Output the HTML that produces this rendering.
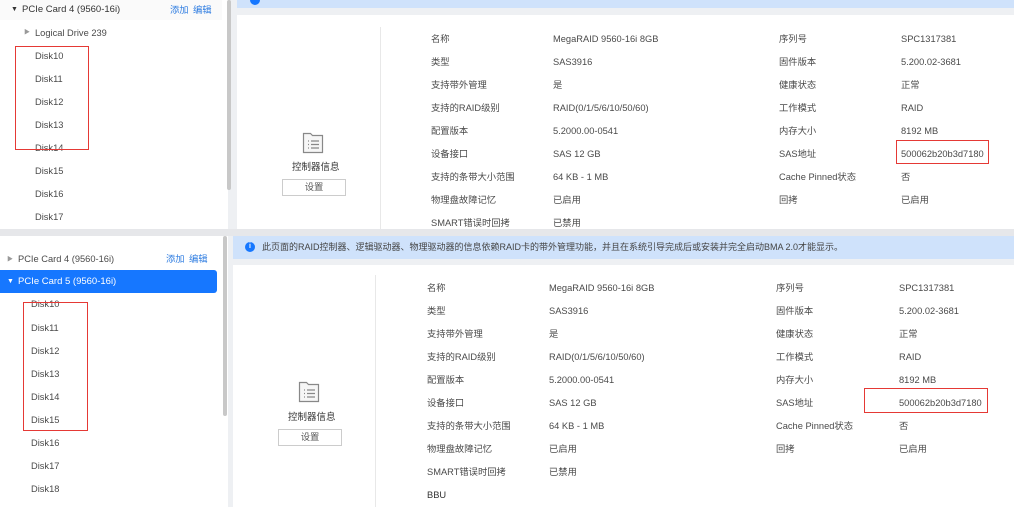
<!DOCTYPE html>
<html><head><meta charset="utf-8"><style>
*{margin:0;padding:0;box-sizing:border-box}
body{width:1014px;height:507px;overflow:hidden;background:#eef0f3;font-family:"Liberation Sans","Noto Sans CJK SC",sans-serif;font-size:9.3px;line-height:12px;color:#4a4a4a;position:relative}
.a{position:absolute;white-space:nowrap}
.side{position:absolute;left:0;width:228px;background:#fff}
.card{position:absolute;background:#fff}
.info{position:absolute;background:#cfe2fb;color:#444}
.red{position:absolute;border:1.5px solid #e53935}
.btn{position:absolute;border:1px solid #ccc;background:#fff;text-align:center;color:#555}
.vl{position:absolute;width:1px;background:#e8e8e8}
.sb{position:absolute;width:4px;background:#c8c8c8;border-radius:2px}
.blue{color:#2f7de1}
.dk{color:#333}
</style></head><body>
<!-- TOP PANEL -->
<div class="side" style="top:0;height:229px"></div>
<div class="a" style="left:0;top:0;width:222px;height:20px;background:#fafafa"></div>
<div class="sb" style="left:227px;top:0;height:190px"></div>
<div class="a dk" style="left:11px;top:4px;font-size:7px">▼</div>
<div class="a dk" style="left:22px;top:4px;font-size:9.5px">PCIe Card 4 (9560-16i)</div>
<div class="a blue" style="left:170px;top:4px">添加</div>
<div class="a blue" style="left:193px;top:4px">编辑</div>
<div class="a" style="left:24px;top:27px;font-size:6px;color:#999">▶</div>
<div class="a" style="left:35px;top:27px">Logical Drive 239</div>
<div class="a" style="left:35px;top:50px">Disk10</div>
<div class="a" style="left:35px;top:73px">Disk11</div>
<div class="a" style="left:35px;top:96px">Disk12</div>
<div class="a" style="left:35px;top:119px">Disk13</div>
<div class="a" style="left:35px;top:142px">Disk14</div>
<div class="a" style="left:35px;top:165px">Disk15</div>
<div class="a" style="left:35px;top:188px">Disk16</div>
<div class="a" style="left:35px;top:211px">Disk17</div>
<div class="red" style="left:15px;top:46px;width:74px;height:104px"></div>

<div class="info" style="left:237px;top:0;width:777px;height:8px"></div>
<div class="a" style="left:250px;top:-5px;width:10px;height:10px;border-radius:50%;background:#1677ff"></div>
<div class="card" style="left:237px;top:15px;width:777px;height:214px"></div>
<div class="vl" style="left:380px;top:27px;height:202px"></div>
<svg class="a" style="left:302px;top:131px" width="22" height="23" viewBox="0 0 22 23"><path d="M1.5 2.5h7l2 2h10v17h-19z" fill="#f6f6f6" stroke="#888" stroke-width="1.2"/><path d="M6 10h1M9 10h8M6 13.5h1M9 13.5h8M6 17h1M9 17h8" stroke="#888" stroke-width="1.2"/></svg>
<div class="a dk" style="left:292px;top:162px;font-size:9.5px">控制器信息</div>
<div class="btn" style="left:282px;top:179px;width:64px;height:17px;line-height:15px">设置</div>

<div class="a" style="left:431px;top:33px">名称</div><div class="a" style="left:553px;top:33px">MegaRAID 9560-16i 8GB</div>
<div class="a" style="left:431px;top:56px">类型</div><div class="a" style="left:553px;top:56px">SAS3916</div>
<div class="a" style="left:431px;top:79px">支持带外管理</div><div class="a" style="left:553px;top:79px">是</div>
<div class="a" style="left:431px;top:102px">支持的RAID级别</div><div class="a" style="left:553px;top:102px">RAID(0/1/5/6/10/50/60)</div>
<div class="a" style="left:431px;top:125px">配置版本</div><div class="a" style="left:553px;top:125px">5.2000.00-0541</div>
<div class="a" style="left:431px;top:148px">设备接口</div><div class="a" style="left:553px;top:148px">SAS 12 GB</div>
<div class="a" style="left:431px;top:171px">支持的条带大小范围</div><div class="a" style="left:553px;top:171px">64 KB - 1 MB</div>
<div class="a" style="left:431px;top:194px">物理盘故障记忆</div><div class="a" style="left:553px;top:194px">已启用</div>
<div class="a" style="left:431px;top:217px">SMART错误时回拷</div><div class="a" style="left:553px;top:217px">已禁用</div>

<div class="a" style="left:779px;top:33px">序列号</div><div class="a" style="left:901px;top:33px">SPC1317381</div>
<div class="a" style="left:779px;top:56px">固件版本</div><div class="a" style="left:901px;top:56px">5.200.02-3681</div>
<div class="a" style="left:779px;top:79px">健康状态</div><div class="a" style="left:901px;top:79px">正常</div>
<div class="a" style="left:779px;top:102px">工作模式</div><div class="a" style="left:901px;top:102px">RAID</div>
<div class="a" style="left:779px;top:125px">内存大小</div><div class="a" style="left:901px;top:125px">8192 MB</div>
<div class="a" style="left:779px;top:148px">SAS地址</div><div class="a" style="left:901px;top:148px">500062b20b3d7180</div>
<div class="a" style="left:779px;top:171px">Cache Pinned状态</div><div class="a" style="left:901px;top:171px">否</div>
<div class="a" style="left:779px;top:194px">回拷</div><div class="a" style="left:901px;top:194px">已启用</div>
<div class="red" style="left:896px;top:140px;width:93px;height:24px"></div>

<!-- divider -->
<div class="a" style="left:0;top:229px;width:1014px;height:7px;background:#e6e7ea"></div>

<!-- BOTTOM PANEL -->
<div class="side" style="top:236px;height:271px"></div>
<div class="sb" style="left:223px;top:236px;height:180px"></div>
<div class="a" style="left:7px;top:254px;font-size:6px;color:#999">▶</div>
<div class="a" style="left:18px;top:253px">PCIe Card 4 (9560-16i)</div>
<div class="a blue" style="left:166px;top:253px">添加</div>
<div class="a blue" style="left:189px;top:253px">编辑</div>
<div class="a" style="left:31px;top:298px">Disk10</div>
<div class="a" style="left:0;top:270px;width:217px;height:23px;background:#1677ff;border-radius:0 3px 3px 0"></div>
<div class="a" style="left:7px;top:276px;font-size:7px;color:#fff">▼</div>
<div class="a" style="left:18px;top:276px;color:#fff;font-size:9.5px">PCIe Card 5 (9560-16i)</div>
<div class="a" style="left:31px;top:322px">Disk11</div>
<div class="a" style="left:31px;top:345px">Disk12</div>
<div class="a" style="left:31px;top:368px">Disk13</div>
<div class="a" style="left:31px;top:391px">Disk14</div>
<div class="a" style="left:31px;top:414px">Disk15</div>
<div class="a" style="left:31px;top:437px">Disk16</div>
<div class="a" style="left:31px;top:460px">Disk17</div>
<div class="a" style="left:31px;top:483px">Disk18</div>
<div class="red" style="left:23px;top:302px;width:65px;height:129px"></div>

<div class="info" style="left:233px;top:236px;width:781px;height:23px"></div>
<div class="a" style="left:245px;top:242px;width:10px;height:10px;border-radius:50%;background:#1677ff;color:#fff;font-size:7px;text-align:center;line-height:10px;font-weight:bold">i</div>
<div class="a" style="left:262px;top:241px;font-size:9px;color:#444">此页面的RAID控制器、逻辑驱动器、物理驱动器的信息依赖RAID卡的带外管理功能，并且在系统引导完成后或安装并完全启动BMA 2.0才能显示。</div>
<div class="card" style="left:233px;top:265px;width:781px;height:242px"></div>
<div class="vl" style="left:375px;top:275px;height:232px"></div>
<svg class="a" style="left:298px;top:380px" width="22" height="23" viewBox="0 0 22 23"><path d="M1.5 2.5h7l2 2h10v17h-19z" fill="#f6f6f6" stroke="#888" stroke-width="1.2"/><path d="M6 10h1M9 10h8M6 13.5h1M9 13.5h8M6 17h1M9 17h8" stroke="#888" stroke-width="1.2"/></svg>
<div class="a dk" style="left:288px;top:412px;font-size:9.5px">控制器信息</div>
<div class="btn" style="left:278px;top:429px;width:64px;height:17px;line-height:15px">设置</div>

<div class="a" style="left:427px;top:282px">名称</div><div class="a" style="left:549px;top:282px">MegaRAID 9560-16i 8GB</div>
<div class="a" style="left:427px;top:305px">类型</div><div class="a" style="left:549px;top:305px">SAS3916</div>
<div class="a" style="left:427px;top:328px">支持带外管理</div><div class="a" style="left:549px;top:328px">是</div>
<div class="a" style="left:427px;top:351px">支持的RAID级别</div><div class="a" style="left:549px;top:351px">RAID(0/1/5/6/10/50/60)</div>
<div class="a" style="left:427px;top:374px">配置版本</div><div class="a" style="left:549px;top:374px">5.2000.00-0541</div>
<div class="a" style="left:427px;top:397px">设备接口</div><div class="a" style="left:549px;top:397px">SAS 12 GB</div>
<div class="a" style="left:427px;top:420px">支持的条带大小范围</div><div class="a" style="left:549px;top:420px">64 KB - 1 MB</div>
<div class="a" style="left:427px;top:443px">物理盘故障记忆</div><div class="a" style="left:549px;top:443px">已启用</div>
<div class="a" style="left:427px;top:466px">SMART错误时回拷</div><div class="a" style="left:549px;top:466px">已禁用</div>
<div class="a dk" style="left:427px;top:489px">BBU</div>

<div class="a" style="left:776px;top:282px">序列号</div><div class="a" style="left:899px;top:282px">SPC1317381</div>
<div class="a" style="left:776px;top:305px">固件版本</div><div class="a" style="left:899px;top:305px">5.200.02-3681</div>
<div class="a" style="left:776px;top:328px">健康状态</div><div class="a" style="left:899px;top:328px">正常</div>
<div class="a" style="left:776px;top:351px">工作模式</div><div class="a" style="left:899px;top:351px">RAID</div>
<div class="a" style="left:776px;top:374px">内存大小</div><div class="a" style="left:899px;top:374px">8192 MB</div>
<div class="a" style="left:776px;top:397px">SAS地址</div><div class="a" style="left:899px;top:397px">500062b20b3d7180</div>
<div class="a" style="left:776px;top:420px">Cache Pinned状态</div><div class="a" style="left:899px;top:420px">否</div>
<div class="a" style="left:776px;top:443px">回拷</div><div class="a" style="left:899px;top:443px">已启用</div>
<div class="red" style="left:864px;top:388px;width:124px;height:25px"></div>
</body></html>
